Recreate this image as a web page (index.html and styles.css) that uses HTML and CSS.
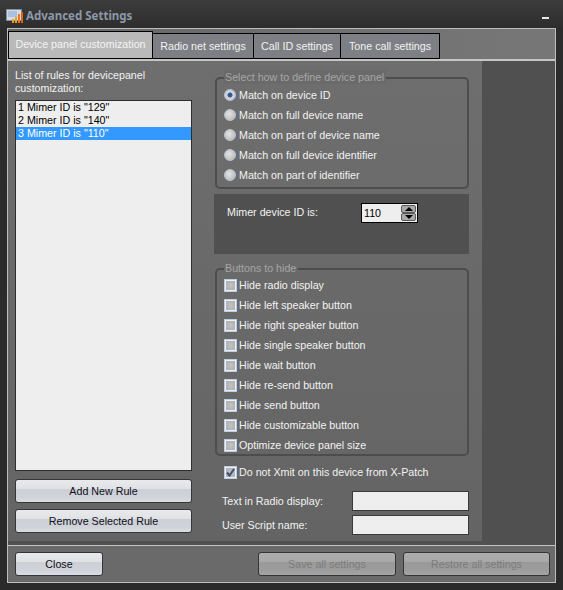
FILE: index.html
```html
<!DOCTYPE html>
<html lang="en">

<head>
    <meta charset="UTF-8">
    <title>Advanced Settings</title>
    <link rel="stylesheet" href="styles.css">
</head>

<body>
    <div class="window">
        <div class="titlebar">
            <svg class="app-icon" width="17" height="17" viewBox="0 0 17 17">
                <rect x="0.5" y="2.5" width="15" height="11" fill="#d5dce6" stroke="#8a919c" stroke-width="0.6"/>
                <rect x="2" y="4" width="9" height="6" fill="#a9c2e2"/>
                <rect x="6" y="12" width="2" height="4" fill="#f0a020"/>
                <rect x="9" y="10" width="2" height="6" fill="#f0a020"/>
                <rect x="12" y="7" width="2" height="9" fill="#e87818"/>
                <rect x="15" y="5" width="2" height="11" fill="#e06010"/>
            </svg>
            <span class="title-text">Advanced Settings</span>
            <span class="minimize"></span>
        </div>

        <div class="frame">
            <div class="tabs">
                <div class="tab active">Device panel customization</div>
                <div class="tab w-radio">Radio net settings</div>
                <div class="tab w-call">Call ID settings</div>
                <div class="tab w-tone">Tone call settings</div>
            </div>

            <div class="body">
                <div class="page">
                    <div class="rules">
                        <div class="rules-label">List of rules for devicepanel customization:</div>
                        <div class="rule-list">
                            <div class="rule">1 Mimer ID is "129"</div>
                            <div class="rule">2 Mimer ID is "140"</div>
                            <div class="rule selected">3 Mimer ID is "110"</div>
                        </div>
                        <button class="btn wide">Add New Rule</button>
                        <button class="btn wide">Remove Selected Rule</button>
                    </div>

                    <div class="settings">
                        <div class="group group-define">
                            <div class="legend">Select how to define device panel</div>
                            <div class="option"><span class="radio checked"></span>Match on device ID</div>
                            <div class="option"><span class="radio"></span>Match on full device name</div>
                            <div class="option"><span class="radio"></span>Match on part of device name</div>
                            <div class="option"><span class="radio"></span>Match on full device identifier</div>
                            <div class="option"><span class="radio"></span>Match on part of identifier</div>
                        </div>

                        <div class="id-panel">
                            <span class="id-label">Mimer device ID is:</span>
                            <div class="spinner">
                                <span class="spinner-value">110</span>
                                <div class="spinner-arrows">
                                    <span class="arrow-btn"><span class="arrow-up"></span></span>
                                    <span class="arrow-btn"><span class="arrow-down"></span></span>
                                </div>
                            </div>
                        </div>

                        <div class="group group-hide">
                            <div class="legend">Buttons to hide</div>
                            <div class="option"><span class="check"></span>Hide radio display</div>
                            <div class="option"><span class="check"></span>Hide left speaker button</div>
                            <div class="option"><span class="check"></span>Hide right speaker button</div>
                            <div class="option"><span class="check"></span>Hide single speaker button</div>
                            <div class="option"><span class="check"></span>Hide wait button</div>
                            <div class="option"><span class="check"></span>Hide re-send button</div>
                            <div class="option"><span class="check"></span>Hide send button</div>
                            <div class="option"><span class="check"></span>Hide customizable button</div>
                            <div class="option"><span class="check"></span>Optimize device panel size</div>
                        </div>

                        <div class="option xmit">
                            <span class="check">
                                <svg width="9" height="9" viewBox="0 0 9 9">
                                    <path d="M1 4.5 L3.5 7.5 L8 1" fill="none" stroke="#3f4f78" stroke-width="2"/>
                                </svg>
                            </span>Do not Xmit on this device from X-Patch
                        </div>

                        <div class="field first">
                            <span>Text in Radio display:</span>
                            <div class="text-input"></div>
                        </div>
                        <div class="field">
                            <span>User Script name:</span>
                            <div class="text-input"></div>
                        </div>
                    </div>
                </div>
                <div class="side"></div>
            </div>

            <div class="footer">
                <button class="btn close">Close</button>
                <button class="btn disabled save">Save all settings</button>
                <button class="btn disabled restore">Restore all settings</button>
            </div>
        </div>
    </div>
</body>

</html>
```

FILE: styles.css
```css
* {
    margin: 0;
    padding: 0;
    box-sizing: border-box;
}

body {
    width: 563px;
    height: 590px;
    overflow: hidden;
    background: #2b2b2b;
    font-family: "Liberation Sans", sans-serif;
    font-size: 10.7px;
    color: #f2f2f2;
}

.window {
    height: 590px;
    display: flex;
    flex-direction: column;
    background: linear-gradient(#3c3c3c 0, #2c2c2c 30px, #2a2a2a 100%);
}

.titlebar {
    height: 28px;
    flex: none;
    display: flex;
    align-items: center;
    padding: 2px 14px 0 6px;
}

.app-icon {
    margin-right: 3px;
}

.title-text {
    font-family: "Noto Sans", sans-serif;
    font-size: 11.5px;
    font-weight: 700;
    color: #8d99a8;
}

.minimize {
    width: 7px;
    height: 2px;
    margin: 6px 0 0 auto;
    background: #e8e8e8;
}

.frame {
    width: 549px;
    height: 555px;
    margin-left: 7px;
    display: flex;
    flex-direction: column;
    border: 1px solid #bdbdbd;
    background: #696969;
}

/* tabs */
.tabs {
    height: 32px;
    flex: none;
    display: flex;
    align-items: flex-end;
    border-bottom: 2px solid #c6c6c6;
    background: linear-gradient(90deg, #666, #777);
}

.tab {
    height: 26px;
    padding-top: 6px;
    text-align: center;
    background: #7e7f85;
    border: 1px solid #000;
    border-left: none;
}

.tab.active {
    width: 145px;
    height: 28px;
    padding-top: 6px;
    background: #b9b9b9;
    border-left: 1px solid #000;
    color: #f4f4f4;
}

.w-radio { width: 101px; }
.w-call { width: 87px; }
.w-tone { width: 99px; }

/* main page */
.body {
    height: 484px;
    flex: none;
    display: flex;
    background: #505050;
}

.page {
    width: 474px;
    height: 480px;
    display: flex;
    gap: 22px;
    padding: 8px 13px 0 7px;
    background: linear-gradient(#6e6e6e, #646464);
}

.side {
    flex: 1;
}

.rules {
    width: 177px;
    flex: none;
}

.rules-label {
    height: 31px;
    line-height: 13px;
    padding-right: 30px;
}

.rule-list {
    height: 371px;
    margin-bottom: 8px;
    background: #eeeeee;
    border: 1px solid #2e2e2e;
    color: #000;
}

.rule {
    height: 13px;
    line-height: 13px;
    padding-left: 2px;
}

.rule.selected {
    background: #3399ff;
    color: #fff;
}

.btn {
    display: block;
    height: 24px;
    font: inherit;
    color: #101018;
    border: 1px solid #33353a;
    border-radius: 3px;
    background: linear-gradient(#e8eaec 0, #dfe1e4 40%, #cdd0d6 42%, #cfd2d8 75%, #dadce0 100%);
}

.btn.wide {
    width: 177px;
    margin-bottom: 6px;
}

/* right column */
.settings {
    width: 255px;
    flex: none;
}

.group {
    position: relative;
    margin-left: 1px;
    border: 2px solid #4d4d4d;
    border-radius: 5px;
}

.group-define {
    height: 112px;
    margin-top: 8px;
    padding-top: 6px;
}

.group-hide {
    height: 188px;
    margin-top: 14px;
    padding-top: 5px;
}

.legend {
    position: absolute;
    top: -9px;
    left: 7px;
    padding: 0 2px 0 1px;
    line-height: 14px;
    color: #a6a6a6;
    background: #6a6a6a;
}

.option {
    display: flex;
    align-items: center;
    height: 20px;
    padding-left: 7px;
}

.radio {
    width: 12px;
    height: 12px;
    margin-right: 3px;
    border-radius: 50%;
    border: 1px solid #bcc4d0;
    background: radial-gradient(circle at 40% 40%, #e4e4e4, #b0b0b0);
}

.radio.checked {
    background: radial-gradient(circle, #2f4f86 0, #3d5f96 30%, #d8dde6 42%, #aab4c4 100%);
}

.check {
    width: 13px;
    height: 13px;
    margin-right: 2px;
    display: flex;
    align-items: center;
    justify-content: center;
    border: 1px solid #bccde8;
    box-shadow: inset 0 0 0 1px #eef0f4;
    background: radial-gradient(circle, #c2c2c2, #a8a8a8);
}

.id-panel {
    height: 60px;
    margin-top: 5px;
    padding: 9px 0 0 13px;
    display: flex;
    align-items: flex-start;
    background: #505050;
}

.id-label {
    width: 134px;
    margin-top: 3px;
}

.spinner {
    width: 57px;
    height: 20px;
    display: flex;
    justify-content: space-between;
    padding: 1px 1px 1px 2px;
    background: #eeeeee;
    border: 1px solid #000;
    color: #000;
}

.spinner-value {
    line-height: 16px;
}

.spinner-arrows {
    width: 15px;
    display: flex;
    flex-direction: column;
}

.arrow-btn {
    flex: 1;
    display: flex;
    align-items: center;
    justify-content: center;
    background: #a9a9a9;
    border: 1px solid #5a5a5a;
    border-radius: 2px;
}

.arrow-up {
    border: 4px solid transparent;
    border-top: none;
    border-bottom: 4px solid #000;
}

.arrow-down {
    border: 4px solid transparent;
    border-bottom: none;
    border-top: 4px solid #000;
}

.xmit {
    height: 16px;
    margin-top: 8px;
    padding-left: 10px;
}

.field {
    display: flex;
    justify-content: space-between;
    align-items: center;
    height: 20px;
    margin-top: 4px;
    padding-left: 8px;
}

.field.first {
    margin-top: 11px;
}

.text-input {
    width: 117px;
    height: 20px;
    background: #eeeeee;
    border: 1px solid #3a3a3a;
}

/* footer */
.footer {
    flex: 1;
    display: flex;
    align-items: center;
    padding: 0 5px 0 7px;
    border-top: 1px solid #c6c6c6;
    background: #6a6a6a;
}

.close {
    width: 88px;
}

.btn.disabled {
    color: #7c7c7c;
    background: linear-gradient(#adadad 0, #a8a8a8 40%, #9a9a9a 42%, #9c9c9c 75%, #a4a4a4 100%);
}

.save {
    width: 138px;
    margin-left: auto;
}

.restore {
    width: 147px;
    margin-left: 7px;
}
```
